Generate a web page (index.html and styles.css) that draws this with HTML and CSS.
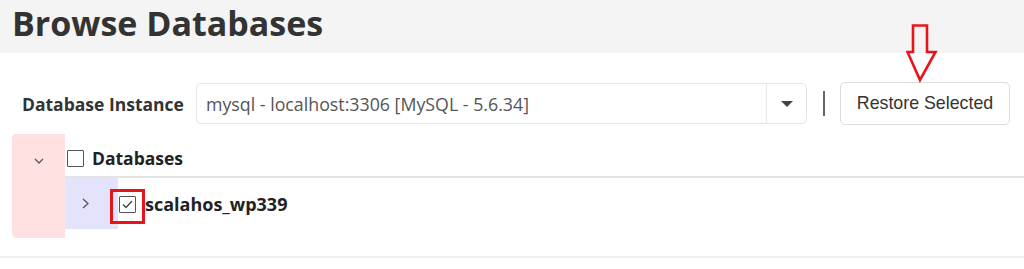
FILE: index.html
```html
<!DOCTYPE html>
<html>
<head>
<meta charset="utf-8">
<link rel="stylesheet" href="styles.css">
</head>
<body>
<div class="page">
  <header class="page-header">
    <h1>Browse Databases</h1>
  </header>
  <svg class="annot-arrow" width="36" height="60" viewBox="0 0 36 60">
    <path d="M7 1.5 H21 V28 H29.5 L14 56 L1.5 28 H7 Z" fill="none" stroke="#e8141c" stroke-width="2.6" stroke-linejoin="miter"/>
  </svg>
  <div class="toolbar">
    <label class="field-label">Database Instance</label>
    <div class="select">
      <span class="select-value">mysql - localhost:3306 [MySQL - 5.6.34]</span>
      <span class="select-caret"><span class="caret"></span></span>
    </div>
    <span class="separator"></span>
    <button class="btn">Restore Selected</button>
  </div>
  <div class="panel">
    <div class="tree">
      <div class="hl-pink">
        <svg class="chev-down" width="10" height="6" viewBox="0 0 10 6"><path d="M1 1 L5 5 L9 1" fill="none" stroke="#555" stroke-width="1.3"/></svg>
      </div>
      <div class="tree-body">
        <div class="tree-row root">
          <span class="cb"></span>
          <span class="node-label">Databases</span>
        </div>
        <div class="tree-row child">
          <div class="hl-lav">
            <svg class="chev-right" width="7" height="11" viewBox="0 0 7 11"><path d="M1 1 L6 5.5 L1 10" fill="none" stroke="#555" stroke-width="1.3"/></svg>
          </div>
          <span class="cb checked">
            <svg width="15" height="15" viewBox="0 0 15 15"><path d="M3 7.5 L6 10.5 L12 4" fill="none" stroke="#444" stroke-width="1.3"/></svg>
          </span>
          <span class="node-label db">scalahos_wp339</span>
        </div>
      </div>
    </div>
  </div>
</div>
</body>
</html>
```

FILE: styles.css
```css
*, *::before, *::after { box-sizing: border-box; }
html, body { margin: 0; padding: 0; background: #fff; }
body { font-family: "Open Sans", "DejaVu Sans", sans-serif; color: #333; }
.page { position: relative; width: 1024px; height: 269px; overflow: hidden; }

.page-header {
  background: #f4f4f4;
  height: 53px;
  padding: 0 12px;
}
.page-header h1 {
  margin: 0;
  font-size: 34px;
  line-height: 46px;
  font-weight: 700;
  color: #333;
}

.annot-arrow { position: absolute; left: 906px; top: 24px; }

.toolbar {
  display: flex;
  align-items: center;
  padding: 29px 0 0 22px;
  height: 72px;
}
.field-label {
  width: 174px;
  font-size: 17.5px;
  font-weight: 700;
  color: #333;
}
.select {
  display: flex;
  align-items: stretch;
  width: 611px;
  height: 41px;
  border: 1px solid #e4e4e4;
  border-radius: 5px;
  background: #fff;
}
.select-value {
  flex: 1;
  display: flex;
  align-items: center;
  padding-left: 9px;
  font-size: 17.8px;
  color: #555;
}
.select-caret {
  width: 40px;
  border-left: 1px solid #e8e8e8;
  display: flex;
  align-items: center;
  justify-content: center;
}
.caret {
  width: 0; height: 0;
  border-left: 6px solid transparent;
  border-right: 6px solid transparent;
  border-top: 6px solid #444;
}
.separator {
  width: 2px;
  height: 25px;
  background: #666;
  margin-left: 16px;
}
.btn {
  margin-left: 15px;
  width: 170px;
  height: 43px;
  border: 1px solid #dcdcdc;
  border-radius: 5px;
  background: #fff;
  font-family: "Liberation Sans", Arial, sans-serif;
  font-size: 17.8px;
  color: #333;
  padding: 0;
}

.panel {
  margin-top: 9px;
  padding-bottom: 18px;
  border-bottom: 2px solid #f0f0f0;
}
.tree { display: flex; }
.hl-pink {
  margin-left: 12px;
  width: 53px;
  height: 104px;
  background: #ffe1e2;
  border-radius: 4px 0 0 5px;
  display: flex;
  justify-content: center;
  padding-top: 24px;
}
.tree-body { flex: 1; }
.tree-row { display: flex; align-items: center; }
.tree-row.root {
  height: 44px;
  border-bottom: 2px solid #e3e3e3;
  padding-left: 2px;
  padding-top: 6px;
}
.cb {
  position: relative;
  width: 17px;
  height: 17px;
  border: 1px solid #555;
  border-radius: 1px;
  background: #fff;
  display: flex;
  align-items: center;
  justify-content: center;
}
.node-label {
  font-size: 17.5px;
  font-weight: 700;
  color: #222;
  margin-left: 8px;
}
.tree-row.child { height: 51px; padding-top: 1px; }
.hl-lav {
  align-self: flex-start;
  margin-top: -1px;
  width: 53px;
  height: 51px;
  background: #e3e3fb;
  padding-left: 17px;
  display: flex;
  align-items: center;
}
.cb.checked { margin-left: 1px; }
.cb.checked::after {
  content: "";
  position: absolute;
  left: -10px;
  top: -8px;
  width: 35px;
  height: 35px;
  border: 3px solid #e8141c;
}
.node-label.db { font-size: 18px; margin-left: 9px; }
```
